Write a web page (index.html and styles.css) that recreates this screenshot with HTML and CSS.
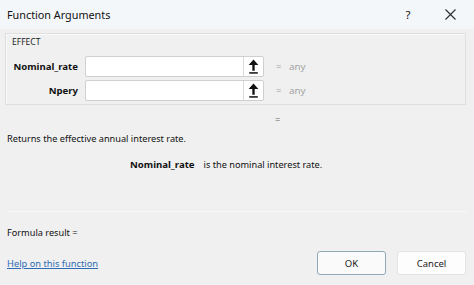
FILE: index.html
```html
<!DOCTYPE html>
<html lang="en">
<head>
    <meta charset="UTF-8">
    <title>Function Arguments</title>
    <link rel="stylesheet" href="styles.css">
</head>
<body>
    <div class="dialog">
        <div class="titlebar">
            <span class="title">Function Arguments</span>
            <span class="help-btn">?</span>
            <span class="close-btn">
                <svg width="11" height="11" viewBox="0 0 11 11"><path d="M0.5 0.5 L10.5 10.5 M10.5 0.5 L0.5 10.5" stroke="#2b2b2b" stroke-width="1.1" fill="none"/></svg>
            </span>
        </div>

        <div class="group">
            <div class="legend">EFFECT</div>
            <div class="arg-row">
                <label class="arg-label">Nominal_rate</label>
                <div class="arg-input">
                    <span class="arg-field"></span>
                    <span class="arg-pick">
                        <svg width="11" height="15" viewBox="0 0 10 14"><path d="M5 0.5 L9.5 5.5 L6.1 5.5 L6.1 11 L3.9 11 L3.9 5.5 L0.5 5.5 Z" fill="#111"/><rect x="1" y="12.3" width="8" height="1.4" fill="#111"/></svg>
                    </span>
                </div>
                <span class="arg-eq">=</span>
                <span class="arg-val">any</span>
            </div>
            <div class="arg-row">
                <label class="arg-label">Npery</label>
                <div class="arg-input">
                    <span class="arg-field"></span>
                    <span class="arg-pick">
                        <svg width="11" height="15" viewBox="0 0 10 14"><path d="M5 0.5 L9.5 5.5 L6.1 5.5 L6.1 11 L3.9 11 L3.9 5.5 L0.5 5.5 Z" fill="#111"/><rect x="1" y="12.3" width="8" height="1.4" fill="#111"/></svg>
                    </span>
                </div>
                <span class="arg-eq">=</span>
                <span class="arg-val">any</span>
            </div>
        </div>

        <div class="result-eq">=</div>
        <p class="desc">Returns the effective annual interest rate.</p>
        <p class="arg-desc"><b>Nominal_rate</b><span>is the nominal interest rate.</span></p>

        <div class="separator"></div>
        <p class="formula">Formula result =</p>

        <div class="footer">
            <a href="#" class="help-link">Help on this function</a>
            <button class="btn btn-default">OK</button>
            <button class="btn">Cancel</button>
        </div>
    </div>
</body>
</html>
```

FILE: styles.css
```css
body {
    margin: 0;
    background-color: #f0f0f0;
    font-family: "Noto Sans", "Open Sans", sans-serif;
    color: #111;
}
.dialog {
    width: 474px;
    height: 285px;
    background-color: #f0f0f0;
    overflow: hidden;
}
.titlebar {
    height: 29px;
    background-color: #f4f7fa;
    display: flex;
    align-items: center;
    padding-left: 7px;
}
.title {
    font-size: 10.8px;
    flex: 1;
    margin-top: -1px;
}
.help-btn {
    font-size: 11.5px;
    width: 44px;
    text-align: center;
}
.close-btn {
    width: 40px;
    margin-right: 4px;
    display: flex;
    justify-content: center;
}
.group {
    box-sizing: border-box;
    margin: 4px 8px 0 5px;
    height: 72px;
    border: 1px solid #dedede;
    box-shadow: inset 1px 1px 0 #fafafa;
    padding-left: 6px;
}
.legend {
    font-size: 8.5px;
    height: 22px;
    line-height: 16px;
    color: #222;
}
.arg-row {
    display: flex;
    align-items: center;
    height: 21px;
    margin-bottom: 3px;
}
.arg-label {
    width: 66px;
    text-align: right;
    font-weight: bold;
    font-size: 9.6px;
    margin-right: 7px;
}
.arg-input {
    width: 177px;
    height: 19px;
    background-color: #fff;
    border: 1px solid #cfcfcf;
    border-radius: 2px;
    display: flex;
}
.arg-field {
    flex: 1;
}
.arg-pick {
    width: 19px;
    border-left: 1px solid #dadada;
    display: flex;
    align-items: center;
    justify-content: center;
}
.arg-eq {
    font-size: 9.5px;
    color: #9a9a9a;
    margin-left: 12px;
    width: 13px;
}
.arg-val {
    font-size: 9.8px;
    color: #a3a3a3;
}
.result-eq {
    margin: 9px 0 0 275px;
    font-size: 9.5px;
    line-height: 12px;
    color: #666;
    height: 12px;
}
.desc {
    margin: 6px 0 0 7px;
    font-size: 9.2px;
    line-height: 14px;
}
.arg-desc {
    margin: 12px 0 0 130px;
    font-size: 9.2px;
    line-height: 14px;
}
.arg-desc b {
    font-size: 9.6px;
}
.arg-desc span {
    margin-left: 9px;
}
.separator {
    margin: 39px 7px 0 7px;
    border-top: 1px solid #f8f8f8;
}
.formula {
    margin: 14px 0 0 7px;
    font-size: 9.2px;
    line-height: 14px;
}
.footer {
    display: flex;
    align-items: center;
    margin: 11px 8px 0 7px;
    height: 24px;
}
.help-link {
    flex: 1;
    font-size: 9.3px;
    color: #2d6cb5;
    text-decoration: underline;
}
.btn {
    width: 69px;
    height: 24px;
    margin-left: 11px;
    font-family: inherit;
    font-size: 9.5px;
    color: #1b1b1b;
    background-color: #fdfdfd;
    border: 1px solid #e3e3e3;
    border-radius: 3px;
}
.btn-default {
    border-color: #8fa9b6;
    background-color: #fafafa;
}
```
